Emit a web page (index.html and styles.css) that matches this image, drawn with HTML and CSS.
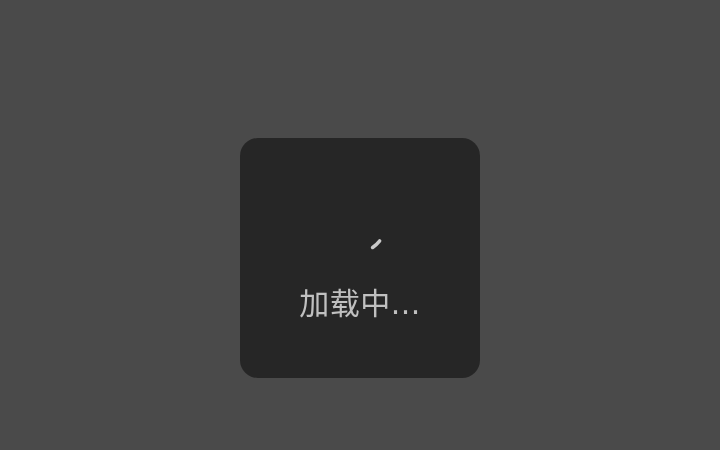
FILE: index.html
```html
<!DOCTYPE html>
<html lang="zh-CN">
<head>
  <meta charset="UTF-8">
  <title>加载中</title>
  <meta name="viewport" content="width=device-width, initial-scale=1">
  <link rel="stylesheet" href="styles.css">
</head>
<body>
  <div class="toast">
    <svg class="spinner" width="60" height="60" viewBox="0 0 60 60">
      <path d="M42.6 37.4 Q47 34.4 49.6 31" fill="none" stroke="#c8c8c8" stroke-width="3.6" stroke-linecap="round"/>
    </svg>
    <div class="toast-text">加载中...</div>
  </div>
</body>
</html>
```

FILE: styles.css
```css
html, body { height: 100%; }
body { margin: 0; background: #4a4a4a; display: flex; justify-content: center; align-items: flex-start; padding-top: 138px; box-sizing: border-box; }
.toast { width: 240px; height: 240px; background: #262626; border-radius: 18px; display: flex; flex-direction: column; align-items: center; padding-top: 72px; box-sizing: border-box; }
.spinner { display: block; }
.toast-text { margin-top: 13px; color: #c0c0c0; font-family: "DejaVu Sans", "Noto Sans CJK SC", sans-serif; font-size: 30px; line-height: 42px; letter-spacing: 0.5px; white-space: nowrap; will-change: opacity; }
```
